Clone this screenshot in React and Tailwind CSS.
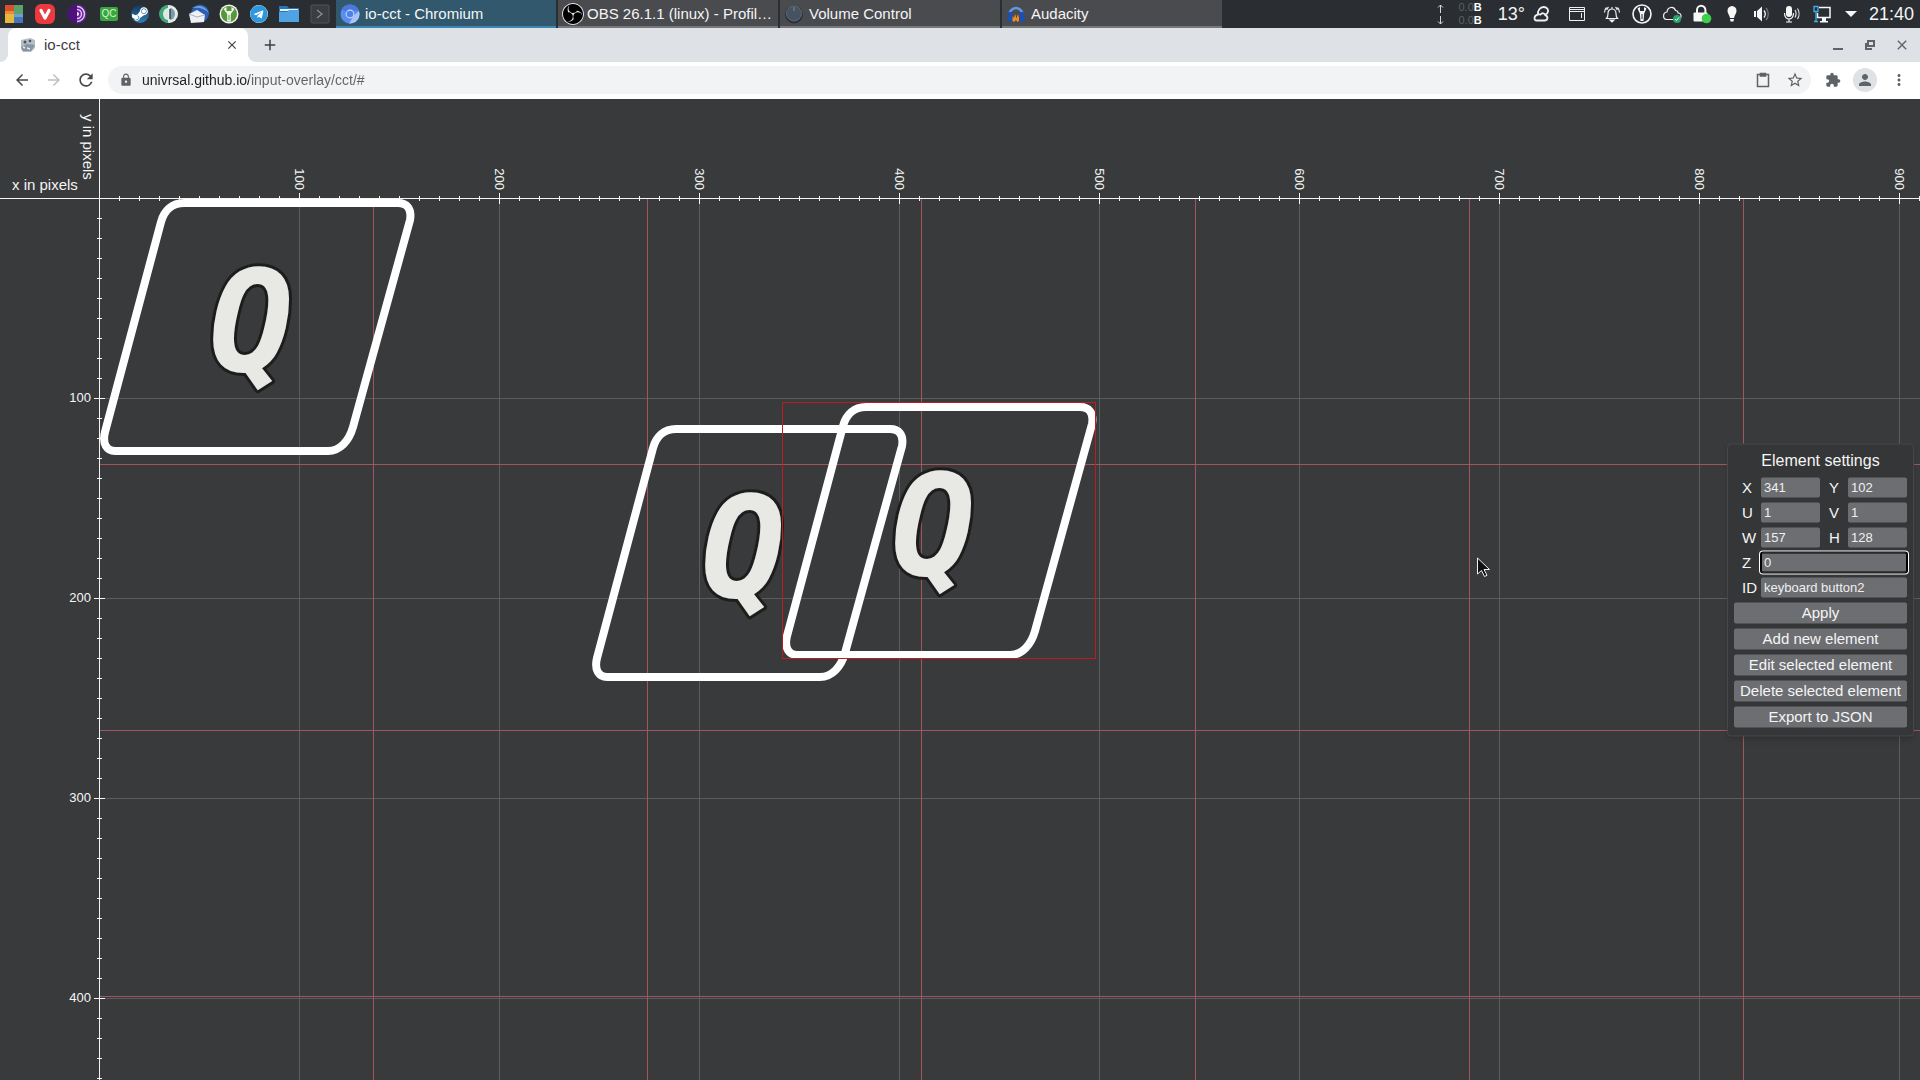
import React, { useLayoutEffect, useRef, useState } from "react";
import { FaSteamSymbol, FaTelegram } from "react-icons/fa";
import { SiObsstudio } from "react-icons/si";
import {
  MdAdd,
  MdArrowBack,
  MdArrowForward,
  MdClose,
  MdExtension,
  MdLock,
  MdMoreVert,
  MdPerson,
  MdRefresh,
  MdStarBorder,
} from "react-icons/md";

const ORIGIN_X = 99;
const ORIGIN_Y = 99;

const steps = (step, end) => {
  const out = [];
  for (let v = step; v < end; v += step) out.push(v);
  return out;
};

/* ---------- launcher icons ---------- */

const Mosaic = () => (
  <svg viewBox="0 0 20 20" className="size-5">
    <rect x="1" y="1" width="9" height="9" fill="#d9512c" />
    <rect x="10" y="1" width="9" height="9" fill="#5aa469" />
    <rect x="1" y="10" width="9" height="9" fill="#e8b83d" />
    <rect x="10" y="10" width="9" height="9" fill="#4477b8" />
    <path d="M1 7h9v3H1z" fill="#ec8a3c" />
    <path d="M10 10h9v3h-9z" fill="#6d9fd0" />
  </svg>
);

const Vivaldi = () => (
  <svg viewBox="0 0 20 20" className="size-5">
    <rect width="20" height="20" rx="6" fill="#ea3a3f" />
    <path d="M6 6.500l4 7.500 4-7.500" fill="none" stroke="#fff" strokeWidth="3.200" strokeLinecap="round" strokeLinejoin="round" />
  </svg>
);

const Tor = () => (
  <svg viewBox="0 0 20 20" className="size-5">
    <circle cx="10" cy="10" r="9.500" fill="#6b1fa0" />
    <path d="M10 .5a9.500 9.500 0 0 0 0 19z" fill="#4c1278" />
    <path d="M10 2.500a7.500 7.500 0 0 1 0 15M10 5.500a4.500 4.500 0 0 1 0 9" fill="none" stroke="#dcc8ee" strokeWidth="1.500" />
    <path d="M10 8a2 2 0 0 1 0 4z" fill="#f1e7fa" />
  </svg>
);

const QtCreator = () => (
  <span className="flex h-3.5 w-[18px] items-center justify-center rounded-xs bg-[#3aa63f] text-[10px] leading-none text-[#d9f3d6]">
    QC
  </span>
);

const Steam = () => (
  <span className="flex size-[18px] items-center justify-center rounded-full bg-linear-to-b from-[#17375c] to-[#2a83b5]">
    <FaSteamSymbol className="size-[18px] text-white" />
  </span>
);

const SplitDisc = () => (
  <svg viewBox="0 0 20 20" className="size-5">
    <circle cx="10" cy="10" r="9" fill="#e6ece9" />
    <path d="M9 1a9 9 0 0 0 0 18z" fill="#3fa77a" />
    <path d="M9 4a5 6 0 0 0 0 12z" fill="#dfe9e4" />
    <path d="M11 4a5 6 0 0 1 0 12z" fill="#7b9aa8" />
    <path d="M11 5v10" stroke="#2f4a5e" strokeWidth="1.500" />
  </svg>
);

const Mail = () => (
  <svg viewBox="0 0 22 20" className="h-5 w-[22px]">
    <circle cx="12" cy="9.500" r="9" fill="#2c5fb3" />
    <path d="M4 4c6-4 14-2 17 5-4-4-9-6-17-5z" fill="#6ca2e0" />
    <path d="M1 10l8-4 8 5-1 7-13 1z" fill="#eef0f6" />
    <path d="M1 10l8 3 8-2" fill="none" stroke="#a9afc4" />
  </svg>
);

const KeyDisc = () => (
  <svg viewBox="0 0 20 20" className="size-5">
    <circle cx="10" cy="10" r="9.500" fill="#f2f7ec" />
    <circle cx="10" cy="10" r="8" fill="#57963f" />
    <path d="M4.500 5l3.700 5v7.500h3.600V10l3.700-5-3-2v4h-5V3z" fill="#f2f7ec" />
    <path d="M10 11v5" stroke="#57963f" />
  </svg>
);

const KeyDiscLight = () => (
  <svg viewBox="0 0 20 20" className="size-5">
    <circle cx="10" cy="10" r="9" fill="none" stroke="#f4f5f6" strokeWidth="1.600" />
    <path d="M5.500 4.500l2.300 5L8.500 17h3l.700-7.500 2.300-5-2.500-1.500V7H8V3z" fill="#f4f5f6" />
    <path d="M10 10v5" stroke="#2a2e32" />
  </svg>
);

const Telegram = () => (
  <span className="flex size-[18px] items-center justify-center rounded-full bg-white">
    <FaTelegram className="size-[18px] text-[#2f97dc]" />
  </span>
);

const Folder = () => (
  <svg viewBox="0 0 20 18" className="h-[18px] w-5">
    <path d="M0 1h8l2 2h10v13H0z" fill="#2478b8" />
    <path d="M1 4h18v2H1z" fill="#e8f1f8" />
    <path d="M0 7h8l2-2h10v12H0z" fill="#4fa3e3" />
  </svg>
);

const Terminal = () => (
  <svg viewBox="0 0 20 20" className="size-5">
    <rect x="1" y="1" width="18" height="18" rx="1" fill="#3b3e40" stroke="#505356" />
    <path d="M7 6l5 4-5 4" fill="none" stroke="#8b8f92" strokeWidth="1.300" />
  </svg>
);

/* ---------- task icons ---------- */

const ChromiumIcon = () => (
  <svg viewBox="0 0 20 20" className="size-5 shrink-0">
    <circle cx="10" cy="10" r="9.500" fill="#5b8def" />
    <path d="M10 10L1.800 5.200A9.500 9.500 0 0 1 18.800 6.500H10z" fill="#4a78dc" />
    <path d="M9 19.500l5-8L19 7a9.500 9.500 0 0 1-10 12.500z" fill="#a6c4f8" />
    <circle cx="10" cy="10" r="4.400" fill="#c8dafc" />
    <circle cx="10" cy="10" r="3.300" fill="#4c82ea" />
  </svg>
);

const ObsIcon = () => (
  <span className="flex size-[22px] shrink-0 items-center justify-center rounded-full bg-black">
    <SiObsstudio className="size-[22px] text-[#e6e6e6]" />
  </span>
);

const KnobIcon = () => (
  <svg viewBox="0 0 20 20" className="size-5 shrink-0">
    <circle cx="10" cy="10.500" r="9" fill="#2b3038" />
    <circle cx="10" cy="9.500" r="7.500" fill="#465260" stroke="#5e6b78" />
    <path d="M10 3v4" stroke="#7d8b99" />
  </svg>
);

const AudacityIcon = () => (
  <svg viewBox="0 0 20 20" className="size-5 shrink-0">
    <path d="M3 12a7 8 0 1 1 14 0" fill="none" stroke="#5f97ea" strokeWidth="2.500" />
    <rect x="1.500" y="8" width="5" height="10" rx="2" fill="#1d4fae" />
    <rect x="13.500" y="8" width="5" height="10" rx="2" fill="#1d4fae" />
    <path d="M6.500 17V12l1.500 2 1-4 1.500 4 1.500-4 1 3.500v3.500l-1.500 1-1.500-2-2 2z" fill="#f08a24" />
  </svg>
);

/* ---------- tray icons ---------- */

const Weather = () => (
  <svg viewBox="0 0 18 18" className="size-[18px]" fill="none" stroke="#eff0f1" strokeWidth="1.800">
    <path d="M4.500 15.500h8.500a2.600 2.600 0 0 0 .5-5.100C13 8 10 7.500 8.500 9.500 5.500 9 2.500 10.500 2.500 13c0 1.500.8 2.500 2 2.500z" />
    <path d="M6 9.500C5.500 5.500 8 1.800 12 2c3.500.2 5 3.200 3.500 5.800-.5 1-1.500 1.700-3 2" />
  </svg>
);
const CalendarIcon = () => (
  <svg viewBox="0 0 18 18" className="size-[18px]" fill="none" stroke="#eff0f1" strokeWidth="1">
    <path d="M1.500 2.500h15v13h-15zM1.500 6.500h15M1.500 4.500h15M13.500 8v5" />
  </svg>
);
const BellIcon = () => (
  <svg viewBox="0 0 18 18" className="size-[18px]" fill="none" stroke="#eff0f1" strokeWidth="1.200">
    <path d="M3.500 13.500h11c-1.500-1.500-1.500-3-1.500-5C13 5.500 11 4 9 4S5 5.500 5 8.500c0 2 0 3.500-1.500 5zM9 2v2" />
    <path d="M3.500 2.500C2 4 1.500 5.500 1.500 7.500M5.500 2C4.500 3 4 4 3.700 5M14.500 2.500C16 4 16.500 5.500 16.500 7.500M12.500 2c1 1 1.500 2 1.800 3" />
    <path d="M7 15h4l-2 2z" fill="#eff0f1" />
  </svg>
);
const CloudIcon = () => (
  <svg viewBox="0 0 20 18" className="h-[18px] w-5" fill="none" stroke="#eff0f1" strokeWidth="1.200">
    <path d="M4.500 14.500h11a3 3 0 0 0 .5-6.500c0-2-1.500-2.500-2.500-2.500C12 1 5.500 1.500 5 7 .5 7.500.5 14 4.500 14.500z" />
    <circle cx="15" cy="14" r="4" fill="#2ba36c" stroke="none" />
    <path d="M13 14l1.500 1.500L17 12.500" strokeWidth="1" />
  </svg>
);
const LockIcon = () => (
  <svg viewBox="0 0 20 20" className="size-5" fill="none">
    <path d="M5 9V6a4.200 4.200 0 0 1 8.400 0v3" stroke="#f7f7f7" strokeWidth="2" />
    <rect x="1.500" y="8.500" width="14" height="9" rx="1" fill="#f7f7f7" />
    <circle cx="14.500" cy="14.500" r="4.800" fill="#3fd04a" />
  </svg>
);
const BulbIcon = () => (
  <svg viewBox="0 0 18 18" className="size-[18px]" fill="#f7f7f7">
    <path d="M9 1a4.700 4.700 0 0 0-4.500 5c0 2.500 2 4 2.500 7h4c.5-3 2.500-4.500 2.500-7A4.700 4.700 0 0 0 9 1zM7 14h4l-.5 2.500h-3z" />
  </svg>
);
const SpeakerIcon = () => (
  <svg viewBox="0 0 18 18" className="size-[18px]" fill="none">
    <path d="M1 6h2v6H1zM4 6l5-4.500v15L4 12z" fill="#f7f7f7" />
    <path d="M11 5.500c1.500 2 1.500 5 0 7" stroke="#f7f7f7" strokeWidth="1.300" />
    <path d="M13 3c3 3 3 9 0 12" stroke="#74787b" strokeWidth="1.300" />
  </svg>
);
const MicIcon = () => (
  <svg viewBox="0 0 18 18" className="size-[18px]" fill="none">
    <rect x="3" y="1" width="6" height="11" rx="3" fill="#f7f7f7" />
    <path d="M1.500 8c0 8 9 8 9 0M6 14v3M3 17h6" stroke="#f7f7f7" strokeWidth="1.200" />
    <path d="M12 5c1.300 2 1.300 5 0 7.500M14.500 3.500c2 3 2 7.500 0 10.500" stroke="#dfe1e2" strokeWidth="1.200" />
  </svg>
);
const ScreenIcon = () => (
  <svg viewBox="0 0 18 18" className="size-[18px]" fill="none">
    <path d="M6 2.500h11v10H4.500V8" stroke="#f7f7f7" strokeWidth="1.500" />
    <path d="M9 13h4v3h2v1.500H7V16h2z" fill="#f7f7f7" />
    <path d="M1 1.500h4v5H1zM3 6.500V16M1 16.500h4" stroke="#3daee9" strokeWidth="1.300" />
  </svg>
);

/* ---------- desktop bar ---------- */

const launchers = [
  { label: "Application menu", icon: Mosaic, width: "w-7" },
  { label: "Vivaldi", icon: Vivaldi, width: "w-[34px]" },
  { label: "Tor Browser", icon: Tor, width: "w-[30px]" },
  { label: "Qt Creator", icon: QtCreator, width: "w-[34px]" },
  { label: "Steam", icon: Steam, width: "w-7" },
  { label: "Audio", icon: SplitDisc, width: "w-[30px]" },
  { label: "Mail", icon: Mail, width: "w-[30px]" },
  { label: "Passwords", icon: KeyDisc, width: "w-[30px]" },
  { label: "Telegram", icon: Telegram, width: "w-[30px]" },
  { label: "Files", icon: Folder, width: "w-[30px]" },
  { label: "Terminal", icon: Terminal, width: "w-8" },
];

const tasks = [
  { title: "io-cct - Chromium", icon: ChromiumIcon, active: true },
  { title: "OBS 26.1.1 (linux) - Profil…", icon: ObsIcon },
  { title: "Volume Control", icon: KnobIcon },
  { title: "Audacity", icon: AudacityIcon },
];

const tray = [
  { label: "Notifications", icon: BellIcon },
  { label: "Password manager", icon: KeyDiscLight },
  { label: "Cloud sync", icon: CloudIcon },
  { label: "Lock status", icon: LockIcon },
  { label: "Night light", icon: BulbIcon },
  { label: "Volume", icon: SpeakerIcon },
  { label: "Microphone", icon: MicIcon },
  { label: "Displays", icon: ScreenIcon },
];

function DesktopBar() {
  return (
    <header className="flex h-7 shrink-0 items-stretch bg-[#2a2e32] text-[#f4f5f6]">
      <nav className="flex shrink-0">
        {launchers.map(({ label, icon: Icon, width }) => (
          <button key={label} aria-label={label} className={`flex items-center justify-center ${width}`}>
            <Icon />
          </button>
        ))}
      </nav>
      <div className="flex min-w-0 gap-0.5">
        {tasks.map(({ title, icon: Icon, active }) => (
          <button
            key={title}
            className={`flex w-[220px] min-w-0 items-center pl-1 text-left text-[15px] leading-6 ${
              active
                ? "bg-[#31586d] shadow-[inset_0_-2px_0_#3c86b4]"
                : "bg-[#4a4b4f] shadow-[inset_0_-2px_0_#77787b]"
            }`}
          >
            <span className="flex w-[25px] shrink-0">
              <Icon />
            </span>
            <span className="truncate">{title}</span>
          </button>
        ))}
      </div>
      <div className="ml-auto flex shrink-0 items-center pr-1.5">
        <svg viewBox="0 0 20 24" className="h-6 w-5" fill="none" stroke="#d4d6d7">
          <path d="M10.500 3v8M8 5.500L10.500 3 13 5.500M10.500 14v8M8 19.500l2.500 2.500 2.500-2.500" />
        </svg>
        <div className="mr-4 ml-2 flex flex-col text-[11px] leading-[13px] text-[#5d6164]">
          <span>
            0.0<b className="text-white">B</b>
          </span>
          <span>
            0.0<b className="text-white">B</b>
          </span>
        </div>
        <span className="text-lg leading-6">13°</span>
        <span className="flex w-8 justify-center">
          <Weather />
        </span>
        <button aria-label="Calendar" className="flex w-10 justify-center">
          <CalendarIcon />
        </button>
        {tray.map(({ label, icon: Icon }) => (
          <button key={label} aria-label={label} className="flex w-[30px] justify-center">
            <Icon />
          </button>
        ))}
        <button aria-label="Show hidden icons" className="flex w-7 justify-center">
          <svg viewBox="0 0 12 8" className="h-2 w-3" fill="#f7f7f7">
            <path d="M0 1h12L6 7z" />
          </svg>
        </button>
        <time className="ml-1 text-lg leading-6">21:40</time>
      </div>
    </header>
  );
}

/* ---------- browser chrome ---------- */

const ControllerIcon = () => (
  <svg viewBox="0 0 16 16" className="size-4">
    <path d="M1 3l9-2 5 2v8l-4 4H3l-2-3z" fill="#b4bdc6" />
    <path d="M1 10l6-3 8 1-4 6H3z" fill="#8794a2" />
    <circle cx="5" cy="5" r="1.500" fill="#4b5560" />
    <circle cx="10" cy="4" r="1.300" fill="#4b5560" />
    <path d="M3 10l2 1M7 11l3 1" stroke="#e5ebf1" strokeWidth="1.500" />
  </svg>
);

function TabStrip() {
  return (
    <div className="flex h-[34px] shrink-0 items-stretch bg-[#dee1e6] text-[#3c4043]">
      <div className="w-2 bg-white">
        <div className="h-full rounded-br-lg bg-[#dee1e6]" />
      </div>
      <div className="flex w-60 items-center gap-2 rounded-t-lg bg-white pr-2 pl-3">
        <ControllerIcon />
        <span className="grow text-[15px] leading-5">io-cct</span>
        <button aria-label="Close tab" className="flex size-4 items-center justify-center">
          <MdClose className="size-3.5" />
        </button>
      </div>
      <div className="w-2 bg-white">
        <div className="h-full rounded-bl-lg bg-[#dee1e6]" />
      </div>
      <button aria-label="New tab" className="flex w-7 items-center justify-center">
        <MdAdd className="size-[18px]" />
      </button>
      <div className="ml-auto flex items-center gap-3 pr-2 text-[#5f6368]">
        <button aria-label="Minimize" className="flex size-5 items-center justify-center">
          <svg viewBox="0 0 12 12" className="size-3">
            <path d="M1 9h10v2H1z" fill="currentColor" />
          </svg>
        </button>
        <button aria-label="Restore" className="flex size-5 items-center justify-center">
          <svg viewBox="0 0 12 12" className="size-3" fill="none" stroke="currentColor" strokeWidth="2">
            <path d="M4 2h6v5H4zM2 4v6h6" />
          </svg>
        </button>
        <button aria-label="Close window" className="flex size-5 items-center justify-center">
          <MdClose className="size-4" />
        </button>
      </div>
    </div>
  );
}

function Toolbar() {
  return (
    <div className="flex h-[37px] shrink-0 items-center bg-white pb-0.5 pl-1.5 text-[#5f6368]">
      <button aria-label="Back" className="flex w-8 justify-center text-[#46494d]">
        <MdArrowBack className="size-[18px]" />
      </button>
      <button aria-label="Forward" className="flex w-8 justify-center text-[#bdbfc2]">
        <MdArrowForward className="size-[18px]" />
      </button>
      <button aria-label="Reload" className="flex w-8 justify-center text-[#46494d]">
        <MdRefresh className="size-5" />
      </button>
      <div className="ml-1.5 flex h-7 grow items-center rounded-full bg-[#f1f3f4] pl-[11px]">
        <MdLock className="size-3.5" />
        <input
          aria-label="Address"
          defaultValue="univrsal.github.io/input-overlay/cct/#"
          className="ml-[9px] h-6 min-w-0 grow bg-[linear-gradient(to_right,#202124_107px,#5f6368_107px)] bg-clip-text text-sm text-transparent outline-none"
        />
        <button aria-label="Clipboard" className="flex w-8 justify-center">
          <svg viewBox="0 0 16 16" className="size-4" fill="none" stroke="currentColor" strokeWidth="1.500">
            <path d="M2.500 2.500h11v12h-11z" />
            <path d="M5.500 1.500h5v2.500h-5z" fill="currentColor" />
          </svg>
        </button>
        <button aria-label="Bookmark" className="flex w-8 justify-center">
          <MdStarBorder className="size-[18px]" />
        </button>
      </div>
      <button aria-label="Extensions" className="ml-1.5 flex w-8 justify-center">
        <MdExtension className="size-4" />
      </button>
      <button aria-label="Profile" className="mr-1.5 ml-1 flex size-6 items-center justify-center rounded-full bg-[#dee1e6]">
        <MdPerson className="size-[18px]" />
      </button>
      <button aria-label="Menu" className="mr-[5px] flex w-8 justify-center">
        <MdMoreVert className="size-[18px]" />
      </button>
    </div>
  );
}

/* ---------- editor canvas ---------- */

function KeySprite({ x, y }) {
  return (
    <g transform={`translate(${x} ${y})`}>
      <path
        d="M61 24C64 13 72 5 84 5H298C307 5 312 11 310 22L253 229C249 243 240 253 228 253H15C7 253 2 246 5 234Z"
        fill="none"
        stroke="#fff"
        strokeWidth="8"
      />
      <text
        x="109"
        y="173"
        className="[font-family:'DejaVu_Sans_Mono',monospace] text-[140px] font-bold italic [paint-order:stroke]"
        fill="#e8e8e5"
        stroke="#1d1d1d"
        strokeWidth="6"
        strokeLinejoin="round"
      >
        Q
      </text>
    </g>
  );
}

function Grid({ width, height }) {
  const right = width - ORIGIN_X;
  const bottom = height - ORIGIN_Y;
  return (
    <g shapeRendering="crispEdges">
      {steps(200, right).map((v) => (
        <rect key={v} x={ORIGIN_X + v} y={ORIGIN_Y} width="1" height={bottom} fill="#5a5c5d" />
      ))}
      {steps(200, bottom).map((v) => (
        <rect key={v} x={ORIGIN_X} y={ORIGIN_Y + v} width={right} height="1" fill="#5a5c5d" />
      ))}
      {steps(274, right).map((v) => (
        <rect key={v} x={ORIGIN_X + v} y={ORIGIN_Y} width="1" height={bottom} fill="#a3545c" />
      ))}
      {steps(266, bottom).map((v) => (
        <rect key={v} x={ORIGIN_X} y={ORIGIN_Y + v} width={right} height="1" fill="#a3545c" />
      ))}
    </g>
  );
}

function Rulers({ width, height }) {
  const right = width - ORIGIN_X;
  const bottom = height - ORIGIN_Y;
  const reach = (v) => (v % 200 === 0 ? 5 : 2);
  return (
    <g fill="#f5f5f5">
      <g shapeRendering="crispEdges">
        <rect x={ORIGIN_X} y="0" width="1" height={height} />
        <rect x="0" y={ORIGIN_Y} width={width} height="1" />
        {steps(20, right).map((v) => (
          <rect key={v} x={ORIGIN_X + v} y={ORIGIN_Y - reach(v)} width="1" height={reach(v) * 2 + 1} />
        ))}
        {steps(20, bottom).map((v) => (
          <rect key={v} x={ORIGIN_X - reach(v)} y={ORIGIN_Y + v} width={reach(v) * 2 + 1} height="1" />
        ))}
      </g>
      <g className="text-[13px]">
        {steps(200, bottom).map((v) => (
          <text key={v} x={ORIGIN_X - 8} y={ORIGIN_Y + v + 4} textAnchor="end">
            {v / 2}
          </text>
        ))}
        {steps(200, right).map((v) => (
          <text key={v} transform={`translate(${ORIGIN_X + v - 4} ${ORIGIN_Y - 8}) rotate(90)`} textAnchor="end">
            {v / 2}
          </text>
        ))}
      </g>
      <g className="text-[15px]">
        <text x="12" y="91">
          x in pixels
        </text>
        <text transform="translate(83 15) rotate(90)">y in pixels</text>
      </g>
    </g>
  );
}

function Field({ label, value, wide, second, focused }) {
  const id = `field-${label.toLowerCase()}`;
  return (
    <>
      <label htmlFor={id} className={`text-[15px] leading-5 ${second ? "pl-[9px]" : ""}`}>
        {label}
      </label>
      <div className={wide ? "col-span-3" : ""}>
        <input
          id={id}
          defaultValue={value}
          className={`block h-5 w-full min-w-0 bg-[#6c6e72] px-[3px] text-[13px] leading-5 text-[#f0f0f0] outline-none ${
            focused ? "rounded-xs shadow-[inset_0_0_0_1px_#000,0_0_0_1px_#000,0_0_0_2px_#fff]" : "rounded-xs"
          }`}
        />
      </div>
    </>
  );
}

const actions = ["Apply", "Add new element", "Edit selected element", "Delete selected element", "Export to JSON"];

function SettingsPanel() {
  return (
    <form
      onSubmit={(e) => e.preventDefault()}
      className="absolute top-1/2 right-1.5 w-[187px] -translate-y-1/2 rounded-sm border border-[#454748] bg-[#343637] px-1.5 pt-1 pb-2 text-[#f5f5f5] shadow-md"
    >
      <h2 className="pb-1.5 text-center text-base leading-[23px]">Element settings</h2>
      <div className="grid grid-cols-[19px_59px_28px_59px] items-center justify-end gap-y-[5px]">
        <Field label="X" value="341" />
        <Field label="Y" value="102" second />
        <Field label="U" value="1" />
        <Field label="V" value="1" second />
        <Field label="W" value="157" />
        <Field label="H" value="128" second />
        <Field label="Z" value="0" wide focused />
        <Field label="ID" value="keyboard button2" wide />
      </div>
      <div className="flex flex-col gap-[5px] pt-[5px]">
        {actions.map((t) => (
          <button key={t} className="h-[21px] rounded-xs bg-[#6c6e72] text-[15px] leading-5 whitespace-nowrap">
            {t}
          </button>
        ))}
      </div>
    </form>
  );
}

function Editor() {
  const ref = useRef(null);
  const [size, setSize] = useState({ width: 0, height: 0 });

  useLayoutEffect(() => {
    const measure = () => setSize({ width: ref.current.clientWidth, height: ref.current.clientHeight });
    measure();
    window.addEventListener("resize", measure);
    return () => window.removeEventListener("resize", measure);
  }, []);

  return (
    <main ref={ref} className="relative min-h-0 grow overflow-hidden bg-[#383a3b]">
      <svg className="absolute inset-0 size-full">
        <Grid {...size} />
        <Rulers {...size} />
        <KeySprite x={100} y={99} />
        <KeySprite x={592} y={325} />
        <KeySprite x={782} y={303} />
        <rect x="782.500" y="303.500" width="313" height="256" fill="none" stroke="#c01c20" />
        <path d="M1477.500 459v16l4-3.500 3 6 2.500-1.200-3-5.800h5.500z" fill="#111" stroke="#f2f2f2" />
      </svg>
      <SettingsPanel />
    </main>
  );
}

export default function App() {
  return (
    <div className="flex h-screen min-w-0 flex-col overflow-hidden [font-family:'Liberation_Sans',Arial,sans-serif]">
      <DesktopBar />
      <TabStrip />
      <Toolbar />
      <Editor />
    </div>
  );
}
